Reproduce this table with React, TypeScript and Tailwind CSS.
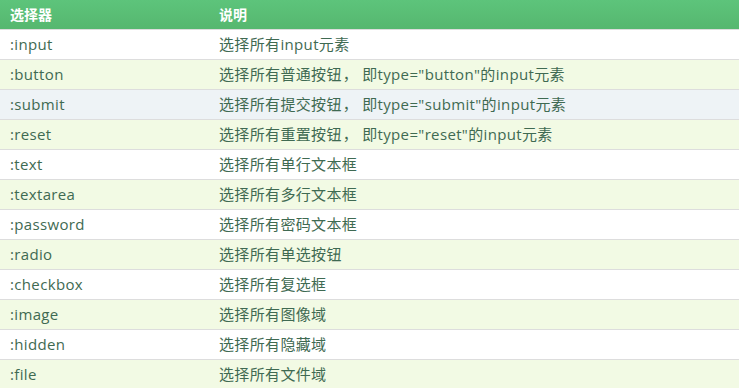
import React from 'react';

const ROWS: [string, string][] = [
  [':input', '选择所有input元素'],
  [':button', '选择所有普通按钮，即type="button"的input元素'],
  [':submit', '选择所有提交按钮，即type="submit"的input元素'],
  [':reset', '选择所有重置按钮，即type="reset"的input元素'],
  [':text', '选择所有单行文本框'],
  [':textarea', '选择所有多行文本框'],
  [':password', '选择所有密码文本框'],
  [':radio', '选择所有单选按钮'],
  [':checkbox', '选择所有复选框'],
  [':image', '选择所有图像域'],
  [':hidden', '选择所有隐藏域'],
  [':file', '选择所有文件域'],
];

// the full-width comma sits centred in a wider box in the original font
function Desc({ text }: { text: string }) {
  const parts = text.split('，');
  if (parts.length === 1) return <>{text}</>;
  return (
    <>
      {parts[0]}
      <span className="inline-block ml-[1px] mr-[4px]">，</span>
      {parts[1]}
    </>
  );
}

export default function App() {
  return (
    <div
      className="w-[739px] h-[388px] overflow-hidden bg-white"
      style={{ fontFamily: '"Open Sans", "Noto Sans CJK SC", sans-serif' }}
    >
      <div className="h-[29px] flex items-center bg-gradient-to-b from-[#5dc47b] to-[#56b76f] text-white font-bold text-[14px]">
        <div className="w-[219px] pl-[10px]">选择器</div>
        <div>说明</div>
      </div>
      {ROWS.map(([sel, desc], i) => {
        const bg = i === 2 ? 'bg-[#eef3f6]' : i % 2 === 1 ? 'bg-[#f2fae4]' : 'bg-white';
        return (
          <div
            key={sel}
            className={`h-[30px] flex items-center border-t border-[#dddddd] text-[15px] tracking-[0.35px] text-[#3f6a52] ${bg}`}
          >
            <div className="w-[219px] pl-[10px]">{sel}</div>
            <div>
              <Desc text={desc} />
            </div>
          </div>
        );
      })}
    </div>
  );
}
